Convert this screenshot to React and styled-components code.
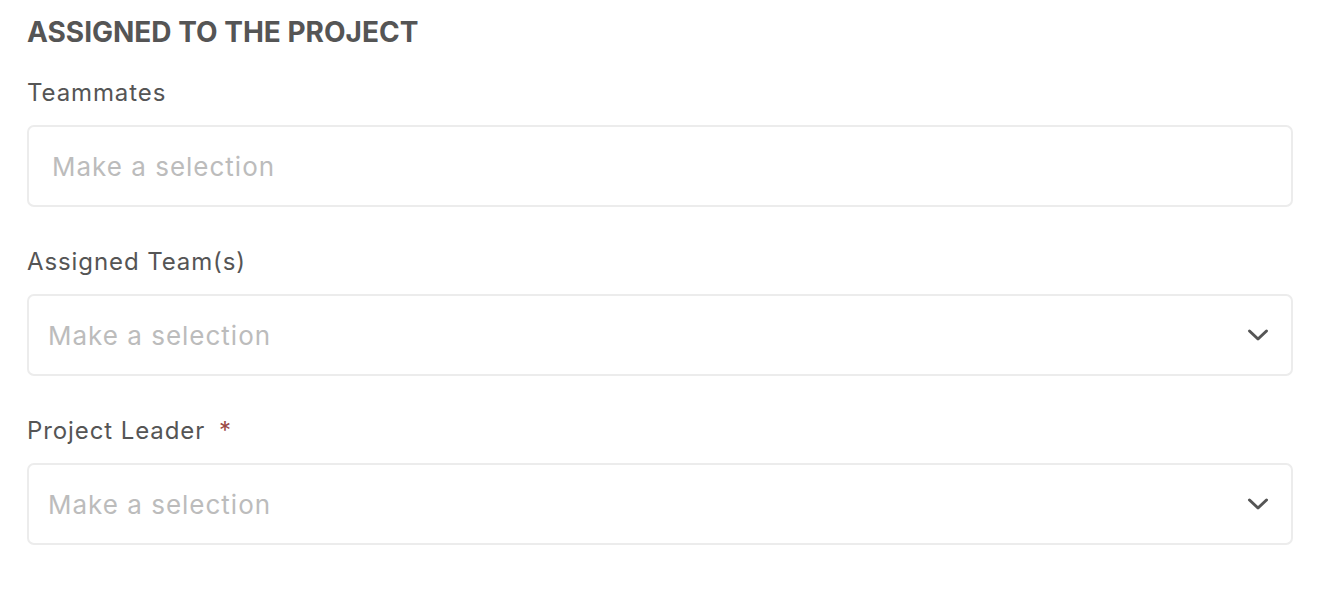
import React from "react";
import styled, { createGlobalStyle } from "styled-components";

const GlobalStyle = createGlobalStyle`
  body {
    margin: 0;
    background: #fff;
    font-family: "Inter", "Liberation Sans", sans-serif;
  }
`;

const Section = styled.div`
  padding: 14px 31px 0 27px;
`;

const Heading = styled.h2`
  margin: 0 0 27px;
  font-size: 28px;
  line-height: 36px;
  font-weight: 700;
  color: #555;
  text-transform: uppercase;
`;

const Field = styled.div`
  display: flex;
  flex-direction: column;
  margin-bottom: 39px;
`;

const Label = styled.label`
  font-size: 24px;
  line-height: 32px;
  letter-spacing: 0.9px;
  color: #555;
  margin-bottom: 16px;

  span {
    color: #9b4a46;
    margin-left: 14px;
  }
`;

const Box = styled.div`
  display: flex;
  align-items: center;
  justify-content: space-between;
  box-sizing: border-box;
  height: 82px;
  padding: 0 22px 0 ${(p) => (p.$select ? "19px" : "23px")};
  border: 2px solid #ececec;
  border-radius: 7px;
  background: #fff;
`;

const Placeholder = styled.span`
  font-size: 26px;
  letter-spacing: 1px;
  color: #bcbcbc;
`;

const Chevron = () => (
  <svg width="22" height="14" viewBox="0 0 22 14" fill="none">
    <path
      d="M2.5 3 L11 11 L19.5 3"
      stroke="#555"
      strokeWidth="3"
      strokeLinecap="round"
      strokeLinejoin="round"
    />
  </svg>
);

const SelectField = ({ label, required, select }) => (
  <Field>
    <Label>
      {label}
      {required && <span>*</span>}
    </Label>
    <Box $select={select}>
      <Placeholder>Make a selection</Placeholder>
      {select && <Chevron />}
    </Box>
  </Field>
);

const App = () => {
  return (
    <>
      <GlobalStyle />
      <Section>
        <Heading>Assigned to the project</Heading>
        <SelectField label="Teammates" />
        <SelectField label="Assigned Team(s)" select />
        <SelectField label="Project Leader" required select />
      </Section>
    </>
  );
};

export default App;
